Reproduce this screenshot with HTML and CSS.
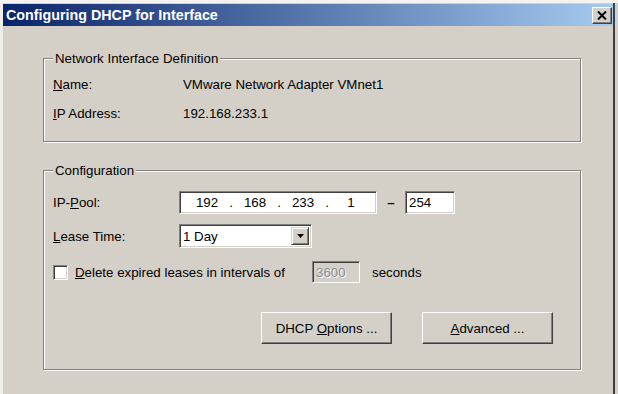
FILE: index.html
```html
<!DOCTYPE html>
<html>
<head>
<meta charset="utf-8">
<link rel="stylesheet" href="styles.css">
</head>
<body>
<div class="window">
  <div class="titlebar">
    <span class="title">Configuring DHCP for Interface</span>
    <span class="close"><svg width="10" height="9" viewBox="0 0 10 9"><path d="M1 0.5 L9 8.5 M9 0.5 L1 8.5" stroke="#000" stroke-width="2" fill="none"/></svg></span>
  </div>

  <div class="group g1">
    <span class="legend">Network Interface Definition</span>
    <div class="row r-name"><span class="label"><u>N</u>ame:</span><span class="value">VMware Network Adapter VMnet1</span></div>
    <div class="row r-ip"><span class="label"><u>I</u>P Address:</span><span class="value">192.168.233.1</span></div>
  </div>

  <div class="group g2">
    <span class="legend">Configuration</span>
    <div class="row r-pool">
      <span class="label">IP-<u>P</u>ool:</span>
      <div class="sunken ipbox">
        <span class="oct">192</span><span class="dot">.</span><span class="oct">168</span><span class="dot">.</span><span class="oct">233</span><span class="dot">.</span><span class="oct">1</span>
      </div>
      <span class="dash">–</span>
      <div class="sunken endbox">254</div>
    </div>
    <div class="row r-lease">
      <span class="label"><u>L</u>ease Time:</span>
      <div class="sunken select"><span class="sel-text">1 Day</span><span class="arrow"><svg width="7" height="4" viewBox="0 0 7 4"><path d="M0 0 H7 L3.5 4 Z" fill="#000"/></svg></span></div>
    </div>
    <div class="row r-check">
      <span class="sunken checkbox"></span>
      <span class="check-label"><u>D</u>elete expired leases in intervals of</span>
      <div class="sunken disabled">3600</div>
      <span class="secs">seconds</span>
    </div>
    <div class="row r-buttons">
      <span class="button"><span>DHCP <u>O</u>ptions ...</span></span>
      <span class="button"><span><u>A</u>dvanced ...</span></span>
    </div>
  </div>
</div>
</body>
</html>
```

FILE: styles.css
```css
html, body {
  margin: 0;
  padding: 0;
  background: #d4d0c8;
}
body {
  font-family: "Liberation Sans", Arial, sans-serif;
  font-size: 13.3px;
  color: #000;
}
.window {
  box-sizing: border-box;
  width: 618px;
  height: 394px;
  overflow: hidden;
  padding: 4px 5px 0 3px;
  background: #d4d0c8;
  box-shadow: inset 0 3px 0 #f4f3ef, inset 3px 0 0 #eeede8, inset -3px 0 0 #d4d0c8, inset -5px 0 0 #404040;
  display: flex;
  flex-direction: column;
}
.titlebar {
  height: 22px;
  display: flex;
  align-items: center;
  padding-left: 3px;
  background: linear-gradient(to right, #0a246a, #a6caf0);
}
.title {
  color: #fff;
  font-weight: bold;
  font-size: 14.3px;
  line-height: 16px;
}
.close {
  margin-left: auto;
  margin-right: 1px;
  margin-top: 1px;
  box-sizing: border-box;
  width: 20px;
  height: 17px;
  background: #d4d0c8;
  border-top: 1px solid #fff;
  border-left: 1px solid #fff;
  border-right: 1px solid #404040;
  border-bottom: 1px solid #404040;
  box-shadow: inset -1px -1px 0 #808080;
  display: flex;
  align-items: center;
  justify-content: center;
}
.close svg { display: block; }

.group {
  box-sizing: border-box;
  width: 538px;
  margin-left: 40px;
  border: 1px solid #808080;
  box-shadow: inset 1px 1px 0 #fff, 1px 1px 0 #fff;
  display: flex;
  flex-direction: column;
  padding-left: 9px;
}
.g1 {
  margin-top: 32px;
  height: 84px;
}
.g2 {
  margin-top: 28px;
  height: 200px;
}
.legend {
  align-self: flex-start;
  margin: -8px 0 0 0;
  padding: 0 2px;
  line-height: 15px;
  background: #d4d0c8;
}
.row {
  display: flex;
  align-items: center;
  line-height: 15px;
}
.label {
  width: 126px;
  flex: none;
}
.value { padding-left: 4px; }
.r-name { margin-top: 11px; }
.r-ip { margin-top: 14px; }

.sunken {
  box-sizing: border-box;
  background: #fff;
  border-top: 1px solid #808080;
  border-left: 1px solid #808080;
  border-right: 1px solid #fff;
  border-bottom: 1px solid #fff;
  box-shadow: inset 1px 1px 0 #404040, inset -1px -1px 0 #d4d0c8;
}
.r-pool { margin-top: 13px; height: 23px; }
.ipbox {
  width: 198px;
  height: 23px;
  display: flex;
  align-items: center;
  padding-left: 9px;
}
.oct {
  width: 36px;
  text-align: center;
}
.dot {
  width: 12px;
  text-align: center;
}
.dash {
  width: 28px;
  text-align: center;
  font-weight: bold;
}
.endbox {
  width: 50px;
  height: 23px;
  padding-left: 3px;
  display: flex;
  align-items: center;
}
.r-lease { margin-top: 10px; height: 24px; }
.select {
  width: 133px;
  height: 24px;
  display: flex;
  align-items: stretch;
  padding: 2px;
}
.sel-text {
  flex: 1;
  display: flex;
  align-items: center;
  padding-left: 1px;
}
.arrow {
  box-sizing: border-box;
  width: 18px;
  background: #d4d0c8;
  border-top: 1px solid #d4d0c8;
  border-left: 1px solid #d4d0c8;
  border-right: 1px solid #404040;
  border-bottom: 1px solid #404040;
  box-shadow: inset 1px 1px 0 #fff, inset -1px -1px 0 #808080;
  display: flex;
  align-items: center;
  justify-content: center;
}
.arrow svg { display: block; }
.r-check { margin-top: 13px; height: 22px; }
.checkbox {
  width: 15px;
  height: 15px;
  flex: none;
}
.check-label {
  margin-left: 7px;
  width: 237px;
}
.disabled {
  width: 48px;
  height: 22px;
  background: #d4d0c8;
  color: #8a8a8a;
  text-shadow: 1px 1px 0 #fff;
  padding-left: 3px;
  display: flex;
  align-items: center;
}
.secs { margin-left: 12px; }
.r-buttons {
  margin-top: 29px;
  height: 32px;
  justify-content: flex-end;
  gap: 30px;
  padding-right: 27px;
}
.button {
  box-sizing: border-box;
  width: 131px;
  height: 32px;
  background: #d4d0c8;
  border-top: 1px solid #fff;
  border-left: 1px solid #fff;
  border-right: 1px solid #404040;
  border-bottom: 1px solid #404040;
  box-shadow: inset -1px -1px 0 #808080;
  display: flex;
  align-items: center;
  justify-content: center;
}
```
